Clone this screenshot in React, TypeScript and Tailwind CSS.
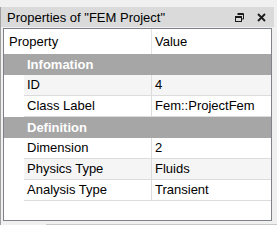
import React from "react"

type Row = { kind: "section"; label: string } | { kind: "item"; label: string; value: string }

const rows: Row[] = [
  { kind: "section", label: "Infomation" },
  { kind: "item", label: "ID", value: "4" },
  { kind: "item", label: "Class Label", value: "Fem::ProjectFem" },
  { kind: "section", label: "Definition" },
  { kind: "item", label: "Dimension", value: "2" },
  { kind: "item", label: "Physics Type", value: "Fluids" },
  { kind: "item", label: "Analysis Type", value: "Transient" },
]

function FloatIcon() {
  return (
    <svg width="9" height="9" viewBox="0 0 9 9" className="block">
      <path d="M2.5 0.5h6v5.5h-2" fill="none" stroke="#1a1a1a" strokeWidth="1" />
      <path d="M2.5 1.5h6" stroke="#1a1a1a" strokeWidth="1" />
      <rect x="0.5" y="3.5" width="6" height="5" fill="none" stroke="#1a1a1a" strokeWidth="1" />
      <path d="M0.5 4.5h6" stroke="#1a1a1a" strokeWidth="1" />
    </svg>
  )
}

function CloseIcon() {
  return (
    <svg width="9" height="9" viewBox="0 0 9 9" className="block">
      <path d="M1 1L8 8M8 1L1 8" stroke="#1a1a1a" strokeWidth="1.8" />
    </svg>
  )
}

export default function App() {
  return (
    <div
      className="w-[277px] h-[225px] bg-[#f0f0f0] overflow-hidden text-[13px] text-black"
      style={{ fontFamily: '"Liberation Sans", Arial, sans-serif' }}
    >
      <div className="h-[7px]" />
      <div className="relative h-[218px] border-l border-[#a0a0a0]">
        {/* title bar */}
        <div className="w-[273px] h-[20px] bg-[#dadada] flex items-center pl-[6px] pr-[8px]">
          <span className="flex-1 leading-none">Properties of "FEM Project"</span>
          <div className="flex items-center gap-[13px] pt-[1px]">
            <FloatIcon />
            <CloseIcon />
          </div>
        </div>
        {/* tree frame */}
        <div className="ml-[2px] mt-[1px] w-[269px] h-[193px] border border-[#7f8389] bg-white">
          <div className="flex h-[25px] items-center">
            <div className="w-[148px] h-full flex items-center pl-[5px] border-r border-[#e3e3e3]">Property</div>
            <div className="flex-1 pl-[3px]">Value</div>
          </div>
          {rows.map((r, i) =>
            r.kind === "section" ? (
              <div key={i} className="h-[21px] bg-[#a6a6a6] flex items-center pl-[23px] font-bold text-white">
                {r.label}
              </div>
            ) : (
              <div key={i} className="flex h-[21px]">
                <div className="w-[20px] bg-white" />
                <div
                  className={`flex flex-1 border-b border-[#dcdcdc] ${i % 2 === 1 ? "bg-[#f5f5f5]" : "bg-white"}`}
                >
                  <div className="w-[128px] flex items-center pl-[3px] border-r border-[#dcdcdc]">{r.label}</div>
                  <div className="flex-1 flex items-center pl-[3px]">{r.value}</div>
                </div>
              </div>
            )
          )}
        </div>
        <div className="absolute left-[45px] bottom-0 w-[232px] h-[1px] bg-[#c8c8c8]" />
      </div>
    </div>
  )
}
